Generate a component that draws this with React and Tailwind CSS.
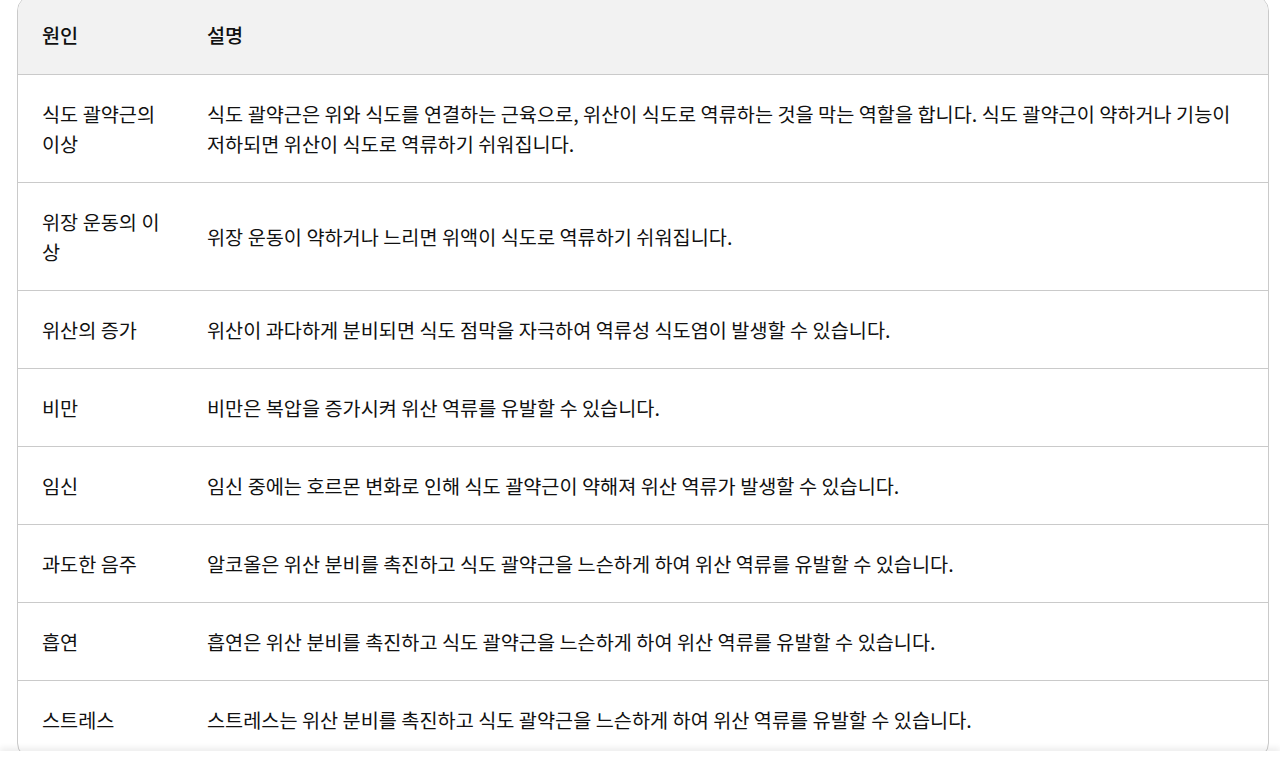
const rows = [
  ["식도 괄약근의 이상", "식도 괄약근은 위와 식도를 연결하는 근육으로, 위산이 식도로 역류하는 것을 막는 역할을 합니다. 식도 괄약근이 약하거나 기능이 저하되면 위산이 식도로 역류하기 쉬워집니다."],
  ["위장 운동의 이상", "위장 운동이 약하거나 느리면 위액이 식도로 역류하기 쉬워집니다."],
  ["위산의 증가", "위산이 과다하게 분비되면 식도 점막을 자극하여 역류성 식도염이 발생할 수 있습니다."],
  ["비만", "비만은 복압을 증가시켜 위산 역류를 유발할 수 있습니다."],
  ["임신", "임신 중에는 호르몬 변화로 인해 식도 괄약근이 약해져 위산 역류가 발생할 수 있습니다."],
  ["과도한 음주", "알코올은 위산 분비를 촉진하고 식도 괄약근을 느슨하게 하여 위산 역류를 유발할 수 있습니다."],
  ["흡연", "흡연은 위산 분비를 촉진하고 식도 괄약근을 느슨하게 하여 위산 역류를 유발할 수 있습니다."],
  ["스트레스", "스트레스는 위산 분비를 촉진하고 식도 괄약근을 느슨하게 하여 위산 역류를 유발할 수 있습니다."],
];

export default function App() {
  return (
    <div
      className="h-[759px] overflow-hidden bg-white text-[#111] relative"
      style={{ fontFamily: '"Noto Sans CJK KR", "Noto Sans", sans-serif' }}
    >
      {/* 원인 표 */}
      <div className="ml-[17px] w-[1252px] mt-[-5px] rounded-2xl border border-[#cacaca] overflow-hidden">
        <table className="w-full border-collapse text-[19.7px] leading-[30px]">
          <thead>
            <tr className="bg-[#f2f2f2]">
              <th className="w-[165px] pl-6 pr-4 pt-6 pb-6 text-left font-medium">원인</th>
              <th className="px-6 pt-6 pb-6 text-left font-medium">설명</th>
            </tr>
          </thead>
          <tbody>
            {rows.map(([cause, desc]) => (
              <tr key={cause} className="border-t border-[#cacaca]">
                <td className="w-[165px] pl-6 pr-4 pt-6 pb-[23px] align-middle">{cause}</td>
                <td className="px-6 pt-6 pb-[23px] align-middle break-keep">{desc}</td>
              </tr>
            ))}
          </tbody>
        </table>
      </div>

      {/* 하단 고정 바 */}
      <div className="absolute left-0 right-0 bottom-0 h-[8px] bg-white shadow-[0_-3px_6px_rgba(0,0,0,0.08)]" />
    </div>
  );
}
